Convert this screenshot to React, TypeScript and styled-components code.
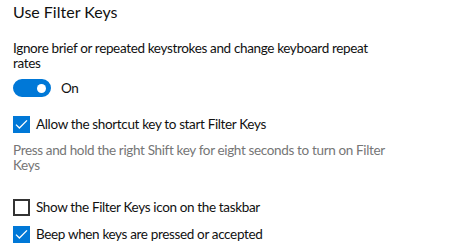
import styled, { createGlobalStyle } from 'styled-components';

const GlobalStyle = createGlobalStyle`
  html, body {
    margin: 0;
    padding: 0;
    background: #ffffff;
  }
  body {
    font-family: 'Lato', 'Open Sans', sans-serif;
    color: #111111;
  }
`;

const Page = styled.div`
  width: 474px;
  height: 245px;
  padding: 1px 0 0 13px;
  box-sizing: border-box;
  overflow: hidden;
`;

const Title = styled.h2`
  margin: 0;
  font-size: 16px;
  font-weight: 400;
  line-height: 22px;
  color: #111;
`;

const Text = styled.p<{ $muted?: boolean; $top: number }>`
  margin: ${(p) => p.$top}px 0 0;
  width: 380px;
  font-size: 13.5px;
  letter-spacing: -0.35px;
  line-height: 15px;
  color: ${(p) => (p.$muted ? '#767676' : '#111')};
`;

const ToggleRow = styled.div`
  display: flex;
  align-items: center;
  gap: 10px;
  margin-top: 8px;
  font-size: 13.5px;
  letter-spacing: -0.35px;
`;

const Track = styled.div<{ $on: boolean }>`
  width: 38px;
  height: 18px;
  border-radius: 9px;
  box-sizing: border-box;
  background: ${(p) => (p.$on ? '#0078d7' : '#fff')};
  border: 2px solid ${(p) => (p.$on ? '#0078d7' : '#333')};
  display: flex;
  align-items: center;
  justify-content: ${(p) => (p.$on ? 'flex-end' : 'flex-start')};
  padding: 0 3px;
`;

const Knob = styled.div<{ $on: boolean }>`
  width: 9px;
  height: 9px;
  border-radius: 50%;
  background: ${(p) => (p.$on ? '#fff' : '#333')};
`;

const CheckRow = styled.label<{ $top: number }>`
  display: flex;
  align-items: center;
  gap: 6px;
  margin-top: ${(p) => p.$top}px;
  font-size: 13.5px;
  letter-spacing: -0.35px;
  line-height: 15px;
`;

const Box = styled.span<{ $checked: boolean }>`
  width: 17px;
  height: 17px;
  flex: none;
  box-sizing: border-box;
  background: ${(p) => (p.$checked ? '#0078d7' : '#fff')};
  border: 2px solid ${(p) => (p.$checked ? '#0078d7' : '#333')};
  display: flex;
  align-items: center;
  justify-content: center;
`;

const Check = () => (
  <svg width="13" height="13" viewBox="0 0 13 13">
    <path d="M1 6.6 L4.4 10 L12 2.4" fill="none" stroke="#fff" strokeWidth="1.3" />
  </svg>
);

const Checkbox = ({ checked, label, top }: { checked: boolean; label: string; top: number }) => (
  <CheckRow $top={top}>
    <Box $checked={checked}>{checked && <Check />}</Box>
    <span>{label}</span>
  </CheckRow>
);

export default function App() {
  return (
    <>
      <GlobalStyle />
      <Page>
        <Title>Use Filter Keys</Title>
        <Text $top={18}>
          Ignore brief or repeated keystrokes and change keyboard repeat rates
        </Text>
        <ToggleRow>
          <Track $on>
            <Knob $on />
          </Track>
          <span>On</span>
        </ToggleRow>
        <Checkbox checked label="Allow the shortcut key to start Filter Keys" top={19} />
        <Text $muted $top={10}>
          Press and hold the right Shift key for eight seconds to turn on Filter Keys
        </Text>
        <Checkbox checked={false} label="Show the Filter Keys icon on the taskbar" top={26} />
        <Checkbox checked label="Beep when keys are pressed or accepted" top={10} />
      </Page>
    </>
  );
}
